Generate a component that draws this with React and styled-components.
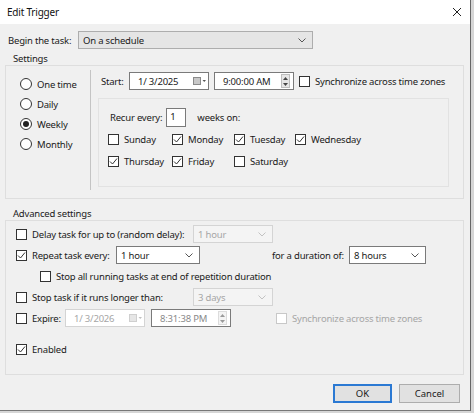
import React from 'react';
import styled, { createGlobalStyle } from 'styled-components';

const Global = createGlobalStyle`
  html, body { margin: 0; padding: 0; background: #d6d6d6; }
  body {
    font-family: "Segoe UI", "Noto Sans", "Open Sans", sans-serif;
    font-size: 9.5px;
    letter-spacing: -0.2px;
    color: #1a1a1a;
  }
  * { box-sizing: border-box; }
`;

const Page = styled.div`
  width: 474px;
  height: 413px;
  display: flex;
  align-items: flex-start;
  background: #d6d6d6;
`;

const Window = styled.div`
  width: 471px;
  height: 411px;
  background: #f0f0f0;
  border-right: 1px solid #666;
  border-bottom: 1px solid #777;
  display: flex;
  flex-direction: column;
`;

const TitleBar = styled.div`
  height: 24px;
  background: #fff;
  display: flex;
  align-items: center;
  justify-content: space-between;
  padding: 0 7px 0 7px;
  flex-shrink: 0;
`;

const Title = styled.span`
  font-size: 10px;
  color: #111;
`;

const Body = styled.div`
  flex: 1;
  padding: 0 6px 0 5px;
  display: flex;
  flex-direction: column;
`;

const Row = styled.div`
  display: flex;
  align-items: center;
  height: ${p => p.$h || 18}px;
  margin-top: ${p => p.$mt || 0}px;
  padding-left: ${p => p.$pl || 0}px;
  flex-shrink: 0;
`;

const Label = styled.span`
  white-space: nowrap;
  width: ${p => (p.$w ? `${p.$w}px` : 'auto')};
  flex-shrink: 0;
  color: ${p => (p.$disabled ? '#a6a6a6' : '#1a1a1a')};
  margin-left: ${p => p.$ml || 0}px;
`;

const ComboBox = styled.div`
  width: ${p => p.$w}px;
  height: ${p => p.$h || 18}px;
  flex-shrink: 0;
  display: flex;
  align-items: center;
  justify-content: space-between;
  padding: 0 6px 0 4px;
  margin-left: ${p => p.$ml || 0}px;
  border: 1px solid ${p => (p.$variant === 'button' ? '#adadad' : p.$variant === 'disabled' ? '#d4d4d4' : '#7a7a7a')};
  background: ${p => (p.$variant === 'button' ? '#e5e5e5' : p.$variant === 'disabled' ? '#f4f4f4' : '#fff')};
  color: ${p => (p.$variant === 'disabled' ? '#a6a6a6' : '#1a1a1a')};
`;

const Chevron = ({ color = '#555' }) => (
  <svg width="8" height="5" viewBox="0 0 8 5">
    <path d="M0.5 0.5 L4 4 L7.5 0.5" fill="none" stroke={color} strokeWidth="1" />
  </svg>
);

const Combo = ({ w, ml, variant = 'edit', children }) => (
  <ComboBox $w={w} $ml={ml} $variant={variant}>
    <span>{children}</span>
    <Chevron color={variant === 'disabled' ? '#c2c2c2' : '#555'} />
  </ComboBox>
);

const FieldBox = styled.div`
  width: ${p => p.$w}px;
  height: ${p => p.$h || 18}px;
  flex-shrink: 0;
  display: flex;
  align-items: center;
  justify-content: space-between;
  padding: 0 1px 0 ${p => p.$pl || 5}px;
  margin-left: ${p => p.$ml || 0}px;
  background: #fff;
  border: 1px solid ${p => (p.$disabled ? '#d4d4d4' : '#7a7a7a')};
  color: ${p => (p.$disabled ? '#a6a6a6' : '#1a1a1a')};
`;

const CalendarIcon = ({ disabled }) => (
  <svg width="14" height="10" viewBox="0 0 14 10">
    <rect x="0.5" y="1.5" width="7" height="7" fill={disabled ? '#e6e6e6' : '#c8c8c8'} stroke={disabled ? '#cfcfcf' : '#8a8a8a'} />
    <path d="M9.5 4 L13 4 L11.25 6 Z" fill={disabled ? '#c0c0c0' : '#555'} />
  </svg>
);

const SpinBox = styled.div`
  width: 9px;
  height: 14px;
  display: flex;
  flex-direction: column;
  justify-content: space-around;
  align-items: center;
  background: ${p => (p.$disabled ? '#f4f4f4' : '#e6e6e6')};
  border: 1px solid ${p => (p.$disabled ? '#dcdcdc' : '#bdbdbd')};
  margin-right: 2px;
`;

const Spin = ({ disabled }) => (
  <SpinBox $disabled={disabled}>
    <svg width="5" height="3" viewBox="0 0 5 3"><path d="M0 3 L2.5 0 L5 3 Z" fill={disabled ? '#9a9a9a' : '#444'} /></svg>
    <svg width="5" height="3" viewBox="0 0 5 3"><path d="M0 0 L2.5 3 L5 0 Z" fill={disabled ? '#9a9a9a' : '#444'} /></svg>
  </SpinBox>
);

const DateField = ({ ml, disabled, children }) => (
  <FieldBox $w={80} $ml={ml} $disabled={disabled} $pl={8}>
    <span>{children}</span>
    <CalendarIcon disabled={disabled} />
  </FieldBox>
);

const TimeField = ({ ml, disabled, children }) => (
  <FieldBox $w={80} $ml={ml} $pl={8}>
    <span style={{ color: disabled ? '#8a8a8a' : '#1a1a1a' }}>{children}</span>
    <Spin disabled={disabled} />
  </FieldBox>
);

const CheckSquare = styled.span`
  width: 11px;
  height: 11px;
  flex-shrink: 0;
  display: inline-flex;
  align-items: center;
  justify-content: center;
  background: #fff;
  border: 1px solid ${p => (p.$disabled ? '#c8c8c8' : '#333')};
  margin-right: 5px;
`;

const CheckLabel = styled.label`
  display: flex;
  align-items: center;
  flex-shrink: 0;
  width: ${p => (p.$w ? `${p.$w}px` : 'auto')};
`;

const Check = ({ checked, disabled, label, w }) => (
  <CheckLabel $w={w}>
    <CheckSquare $disabled={disabled}>
      {checked && (
        <svg width="9" height="9" viewBox="0 0 9 9">
          <path d="M1 4.5 L3.5 7 L8 1.5" fill="none" stroke="#333" strokeWidth="1" />
        </svg>
      )}
    </CheckSquare>
    {label && <Label $disabled={disabled}>{label}</Label>}
  </CheckLabel>
);

const RadioCircle = styled.span`
  width: 12px;
  height: 12px;
  border-radius: 50%;
  border: 1px solid #333;
  background: #fff;
  display: inline-flex;
  align-items: center;
  justify-content: center;
  margin-right: 5px;
  &::after {
    content: '';
    width: 6px;
    height: 6px;
    border-radius: 50%;
    background: ${p => (p.$on ? '#222' : 'transparent')};
  }
`;

const RadioRow = styled.label`
  display: flex;
  align-items: center;
  height: 20px;
`;

const Caption = styled.div`
  height: 12px;
  line-height: 12px;
  padding-left: 8px;
  margin-top: ${p => p.$mt}px;
  flex-shrink: 0;
`;

const GroupBox = styled.div`
  border: 1px solid #dedede;
  width: 459px;
  flex-shrink: 0;
`;

const SettingsGrid = styled.div`
  display: flex;
  height: 132px;
`;

const RadioCol = styled.div`
  width: 84px;
  padding: 8px 0 0 14px;
  display: flex;
  flex-direction: column;
`;

const Divider = styled.div`
  width: 1px;
  background: #c4c4c4;
  margin: 4px 7px 8px 0;
`;

const RightCol = styled.div`
  display: flex;
  flex-direction: column;
  padding-top: 6px;
`;

const WeeklyPanel = styled.div`
  margin-top: 8px;
  width: 351px;
  height: 89px;
  border: 1px solid #e2e2e2;
  padding: 9px 0 0 9px;
`;

const NumberInput = styled.div`
  width: 20px;
  height: 19px;
  background: #fff;
  border: 1px solid #7a7a7a;
  padding-left: 3px;
  line-height: 16px;
  margin-left: ${p => p.$ml}px;
  margin-right: 11px;
`;

const DaysGrid = styled.div`
  display: grid;
  grid-template-columns: 64px 62px 61px auto;
  grid-auto-rows: 18px;
  row-gap: 4px;
  margin-top: 3px;
  align-items: center;
`;

const AdvancedBox = styled(GroupBox)`
  padding: 4px 0 16px 10px;
  display: flex;
  flex-direction: column;
  gap: 3px;
`;

const ButtonRow = styled.div`
  display: flex;
  justify-content: flex-end;
  gap: 7px;
  margin-top: 9px;
  padding-right: 4px;
`;

const Button = styled.button`
  font: inherit;
  color: #1a1a1a;
  width: ${p => p.$w}px;
  height: 19px;
  padding: 0;
  background: #e1e1e1;
  border: ${p => (p.$default ? '2px solid #2b79d3' : '1px solid #adadad')};
`;

export default function App() {
  return (
    <Page>
      <Global />
      <Window>
        <TitleBar>
          <Title>Edit Trigger</Title>
          <svg width="10" height="10" viewBox="0 0 10 10" style={{ marginRight: 1 }}>
            <path d="M1 1 L9 9 M9 1 L1 9" stroke="#222" strokeWidth="1" />
          </svg>
        </TitleBar>
        <Body>
          <Row $mt={7} $pl={3}>
            <Label $w={70}>Begin the task:</Label>
            <Combo w={235} variant="button">On a schedule</Combo>
          </Row>

          <Caption $mt={4}>Settings</Caption>
          <GroupBox>
            <SettingsGrid>
              <RadioCol>
                <RadioRow><RadioCircle />One time</RadioRow>
                <RadioRow><RadioCircle />Daily</RadioRow>
                <RadioRow><RadioCircle $on />Weekly</RadioRow>
                <RadioRow><RadioCircle />Monthly</RadioRow>
              </RadioCol>
              <Divider />
              <RightCol>
                <Row $pl={3}>
                  <Label $w={28}>Start:</Label>
                  <DateField>1/ 3/2025</DateField>
                  <TimeField ml={5}>9:00:00 AM</TimeField>
                  <Row $pl={5}>
                    <Check label="Synchronize across time zones" />
                  </Row>
                </Row>
                <WeeklyPanel>
                  <Row $h={19} $pl={2}>
                    <Label>Recur every:</Label>
                    <NumberInput $ml={4}>1</NumberInput>
                    <Label>weeks on:</Label>
                  </Row>
                  <DaysGrid>
                    <Check label="Sunday" />
                    <Check checked label="Monday" />
                    <Check checked label="Tuesday" />
                    <Check checked label="Wednesday" />
                    <Check checked label="Thursday" />
                    <Check checked label="Friday" />
                    <Check label="Saturday" />
                  </DaysGrid>
                </WeeklyPanel>
              </RightCol>
            </SettingsGrid>
          </GroupBox>

          <Caption $mt={9}>Advanced settings</Caption>
          <AdvancedBox>
            <Row>
              <Check w={177} label="Delay task for up to (random delay):" />
              <Combo w={80} variant="disabled">1 hour</Combo>
            </Row>
            <Row>
              <Check checked w={100} label="Repeat task every:" />
              <Combo w={84}>1 hour</Combo>
              <Label $ml={72} $w={77}>for a duration of:</Label>
              <Combo w={77}>8 hours</Combo>
            </Row>
            <Row $pl={24}>
              <Check label="Stop all running tasks at end of repetition duration" />
            </Row>
            <Row>
              <Check w={177} label="Stop task if it runs longer than:" />
              <Combo w={80} variant="disabled">3 days</Combo>
            </Row>
            <Row>
              <Check w={49} label="Expire:" />
              <DateField disabled>1/ 3/2026</DateField>
              <TimeField ml={6} disabled>8:31:38 PM</TimeField>
              <Row $pl={45}>
                <Check disabled label="Synchronize across time zones" />
              </Row>
            </Row>
            <Row $mt={10}>
              <Check checked label="Enabled" />
            </Row>
          </AdvancedBox>

          <ButtonRow>
            <Button $w={59} $default>OK</Button>
            <Button $w={61}>Cancel</Button>
          </ButtonRow>
        </Body>
      </Window>
    </Page>
  );
}
